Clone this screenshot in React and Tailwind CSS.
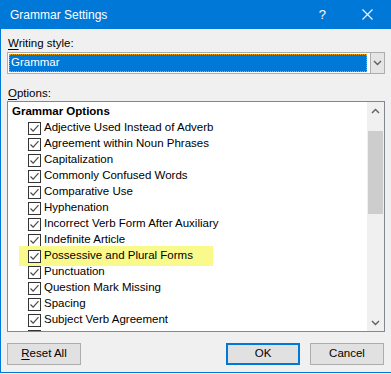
import React from 'react';

const items = [
  'Adjective Used Instead of Adverb',
  'Agreement within Noun Phrases',
  'Capitalization',
  'Commonly Confused Words',
  'Comparative Use',
  'Hyphenation',
  'Incorrect Verb Form After Auxiliary',
  'Indefinite Article',
  'Possessive and Plural Forms',
  'Punctuation',
  'Question Mark Missing',
  'Spacing',
  'Subject Verb Agreement',
];

function Check() {
  return (
    <span className="w-[13px] h-[13px] border border-[#333333] bg-white flex items-center justify-center shrink-0">
      <svg width="11" height="11" viewBox="0 0 11 11">
        <path d="M1.5 5.5 L4.2 8.2 L9.5 2.2" fill="none" stroke="#4a4a4a" strokeWidth="1.2" />
      </svg>
    </span>
  );
}

function Chevron({ up }) {
  return (
    <svg width="9" height="6" viewBox="0 0 9 6">
      <path d={up ? 'M1 5 L4.5 1.5 L8 5' : 'M1 1 L4.5 4.5 L8 1'} fill="none" stroke="#606060" strokeWidth="1.4" />
    </svg>
  );
}

function Button({ children, primary }) {
  return (
    <div
      className={`w-[74px] h-[22px] bg-[#e1e1e1] flex items-center justify-center ${
        primary ? 'border-2 border-[#0078d7]' : 'border border-[#adadad]'
      }`}
    >
      {children}
    </div>
  );
}

export default function App() {
  return (
    <div className="w-[391px] h-[374px] bg-white overflow-hidden text-[11.5px] text-black font-['Segoe_UI','Liberation_Sans',sans-serif]">
      <div className="h-[373px] bg-[#f0f0f0] border-l border-b border-[#0078d7] flex flex-col">
        {/* Title bar */}
        <div className="h-[29px] bg-[#0078d7] text-white flex items-center pl-[9px] pr-[18px] shrink-0">
          <span className="text-[12px] flex-1">Grammar Settings</span>
          <span className="text-[13px] mr-[36px]">?</span>
          <svg width="11" height="11" viewBox="0 0 11 11">
            <path d="M0.5 0.5 L10.5 10.5 M10.5 0.5 L0.5 10.5" stroke="white" strokeWidth="1.1" />
          </svg>
        </div>

        <div className="flex flex-col px-[6px]">
          <div className="h-[16px] mt-[6px] pl-[1px] leading-[16px]">
            <span className="underline underline-offset-2">W</span>riting style:
          </div>
          {/* Select */}
          <div className="mt-[1px] h-[22px] border border-[#adadad] bg-white flex items-stretch">
            <div className="flex-1 p-[1px] pr-[3px]">
              <div className="h-full bg-[#0078d7] text-white border border-dotted border-[#f0a000] flex items-center pl-[1px]">
                Grammar
              </div>
            </div>
            <div className="w-[14px] bg-[#e5e5e5] border-l border-[#adadad] flex items-center justify-center">
              <Chevron />
            </div>
          </div>

          <div className="h-[16px] mt-[11px] pl-[1px] leading-[16px]">
            <span className="underline underline-offset-2">O</span>ptions:
          </div>

          {/* List */}
          <div className="h-[231px] border border-[#828790] bg-white flex overflow-hidden">
            <div className="flex-1 flex flex-col pl-[4px] pt-[1px] overflow-hidden">
              <div className="h-[17px] flex items-center font-bold shrink-0">Grammar Options</div>
              {items.map((it, i) =>
                i === 8 ? (
                  <div
                    key={it}
                    className="h-[20px] -my-[2px] ml-[7px] w-[194px] pl-[9px] bg-[#fafa8c] flex items-center gap-[3px] shrink-0"
                  >
                    <Check />
                    <span>{it}</span>
                  </div>
                ) : (
                  <div key={it} className="h-[16px] pl-[16px] flex items-center gap-[3px] shrink-0">
                    <Check />
                    <span>{it}</span>
                  </div>
                )
              )}
              <div className="h-[16px] pl-[16px] flex items-center shrink-0">
                <Check />
              </div>
            </div>
            <div className="w-[17px] bg-[#f0f0f0] flex flex-col items-center shrink-0">
              <div className="h-[17px] flex items-center justify-center">
                <Chevron up />
              </div>
              <div className="mt-[12px] w-[15px] h-[83px] bg-[#cdcdcd]" />
              <div className="flex-1" />
              <div className="h-[17px] flex items-center justify-center">
                <Chevron />
              </div>
            </div>
          </div>

          {/* Buttons */}
          <div className="mt-[11px] flex items-center">
            <Button>
              <span>
                <span className="underline underline-offset-2">R</span>eset All
              </span>
            </Button>
            <div className="flex-1" />
            <Button primary>OK</Button>
            <div className="w-[10px]" />
            <Button>Cancel</Button>
            <div className="w-[1px]" />
          </div>
        </div>
      </div>
    </div>
  );
}
